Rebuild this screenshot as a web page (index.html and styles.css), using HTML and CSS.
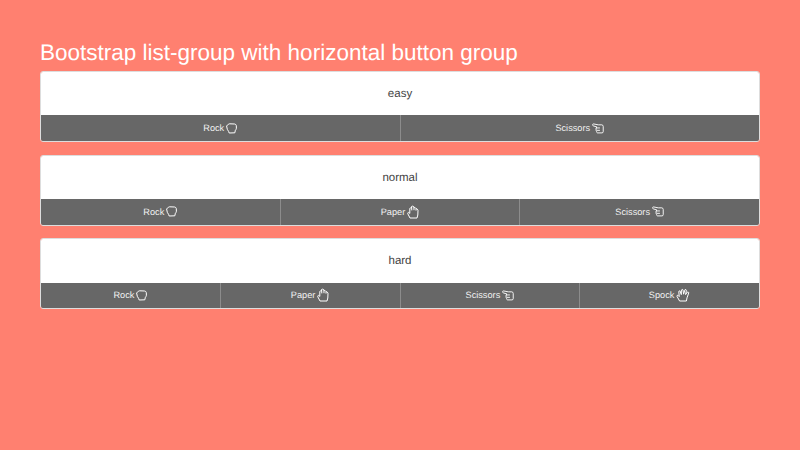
FILE: index.html
```html
<!DOCTYPE html>
<html lang="en">
  <head>
    <meta charset="UTF-8" />
    <title>Bootstrap list-group with horizontal button group</title>
    <link rel="stylesheet" href="styles.css">
  </head>
  <body>
    <svg class="defs" width="0" height="0">
      <symbol id="rock" viewBox="0 0 11 11">
        <path d="M.6 3 L2.4 1.2 Q3 .8 3.8 .8 L8.6 1 Q10 1.2 10.3 2.6 L10.4 5.2 Q10.3 6.4 9.4 7.2 L8.8 9.8 L3.2 10 L2.6 8.4 Q1 7 .6 3 Z" />
      </symbol>
      <symbol id="paper" viewBox="0 0 12 14">
        <path d="M3 13 L.8 8.8 Q.4 7.6 1.6 7.4 L2.8 8.4 L2.8 3.6 Q3.2 2.6 4.2 3 L4.6 1.6 Q5.6 .6 6.8 1.6 L7.2 2.6 Q8.6 2.4 9 3.6 Q10.6 3.8 11 5.2 L10.8 10 L10 13 Z M4.6 1.6 L4.8 5.4 M6.9 2 L7 5.2 M9 3.6 L9 5.6" />
      </symbol>
      <symbol id="scissors" viewBox="0 0 13 12">
        <path d="M.6 2 Q.6 1 1.6 1 L6.8 2 L10.6 2 Q12.2 2.2 12.2 3.8 L12.2 9.4 Q12.2 10.8 10.8 10.8 L6 10.8 Q5 10.6 5 9.4 L4.4 8 L4.4 5.4 L5.4 4.4 L1.6 3.2 Q.6 3 .6 2 Z M4.4 5.4 L8.6 5.4 M5 8 L8.6 8" />
      </symbol>
      <symbol id="spock" viewBox="0 0 14 14">
        <path d="M3.6 13 L1 8.4 Q.7 7.3 1.8 7.2 L3.2 8.6 L2.8 3.6 Q3 2.6 4 2.9 L5.3 6.6 L5.4 2 Q6.2 1 7 1.8 L7.6 6.2 L9 1.6 Q10 1.2 10.4 2.2 L9.6 6.6 L11.4 4 Q12.6 3.8 12.8 4.8 L11 9.8 L10.4 13 Z" />
      </symbol>
    </svg>

    <main class="container">
      <h1 class="page-title">Bootstrap list-group with horizontal button group</h1>

      <ul class="list-group">
        <li class="list-item">easy</li>
        <li class="btn-row">
          <a class="btn" href="#">Rock <svg class="hand"><use href="#rock" /></svg></a>
          <a class="btn" href="#">Scissors <svg class="hand wide"><use href="#scissors" /></svg></a>
        </li>
      </ul>

      <ul class="list-group">
        <li class="list-item">normal</li>
        <li class="btn-row">
          <a class="btn" href="#">Rock <svg class="hand"><use href="#rock" /></svg></a>
          <a class="btn" href="#">Paper <svg class="hand tall"><use href="#paper" /></svg></a>
          <a class="btn" href="#">Scissors <svg class="hand wide"><use href="#scissors" /></svg></a>
        </li>
      </ul>

      <ul class="list-group">
        <li class="list-item">hard</li>
        <li class="btn-row">
          <a class="btn" href="#">Rock <svg class="hand"><use href="#rock" /></svg></a>
          <a class="btn" href="#">Paper <svg class="hand tall"><use href="#paper" /></svg></a>
          <a class="btn" href="#">Scissors <svg class="hand wide"><use href="#scissors" /></svg></a>
          <a class="btn" href="#">Spock <svg class="hand wider"><use href="#spock" /></svg></a>
        </li>
      </ul>
    </main>
  </body>
</html>
```

FILE: styles.css
```css
body {
  margin: 0;
  background: #ff8070;
  font-family: "Liberation Sans", Arial, sans-serif;
  color: #444;
  text-rendering: geometricPrecision;
}

.defs {
  position: absolute;
}

.container {
  width: 720px;
  margin: 0 auto;
  padding-top: 39px;
}

.page-title {
  margin: 0 0 5px;
  font-size: 22.5px;
  font-weight: 400;
  line-height: 27px;
  color: #fff;
}

.list-group {
  margin: 0 0 12.6px;
  padding: 0;
  list-style: none;
  border: 1px solid #ddd;
  border-radius: 3px;
  overflow: hidden;
}

.list-item {
  height: 43.4px;
  background: #fff;
  font-size: 11.5px;
  line-height: 44px;
  text-align: center;
}

.btn-row {
  display: flex;
}

.btn {
  flex: 1;
  display: flex;
  align-items: center;
  justify-content: center;
  gap: 2px;
  height: 25.6px;
  background: #676767;
  border-left: 1px solid #8c8c8c;
  color: #f2f2f2;
  font-size: 9.2px;
  text-decoration: none;
}

.btn:first-child {
  border-left: 0;
}

.hand {
  width: 11px;
  height: 11px;
  fill: none;
  stroke: #fff;
  stroke-width: 1;
  stroke-linejoin: round;
}

.tall {
  width: 12px;
  height: 14px;
}

.wide {
  width: 12px;
}

.wider {
  width: 14px;
  height: 14px;
}
```
